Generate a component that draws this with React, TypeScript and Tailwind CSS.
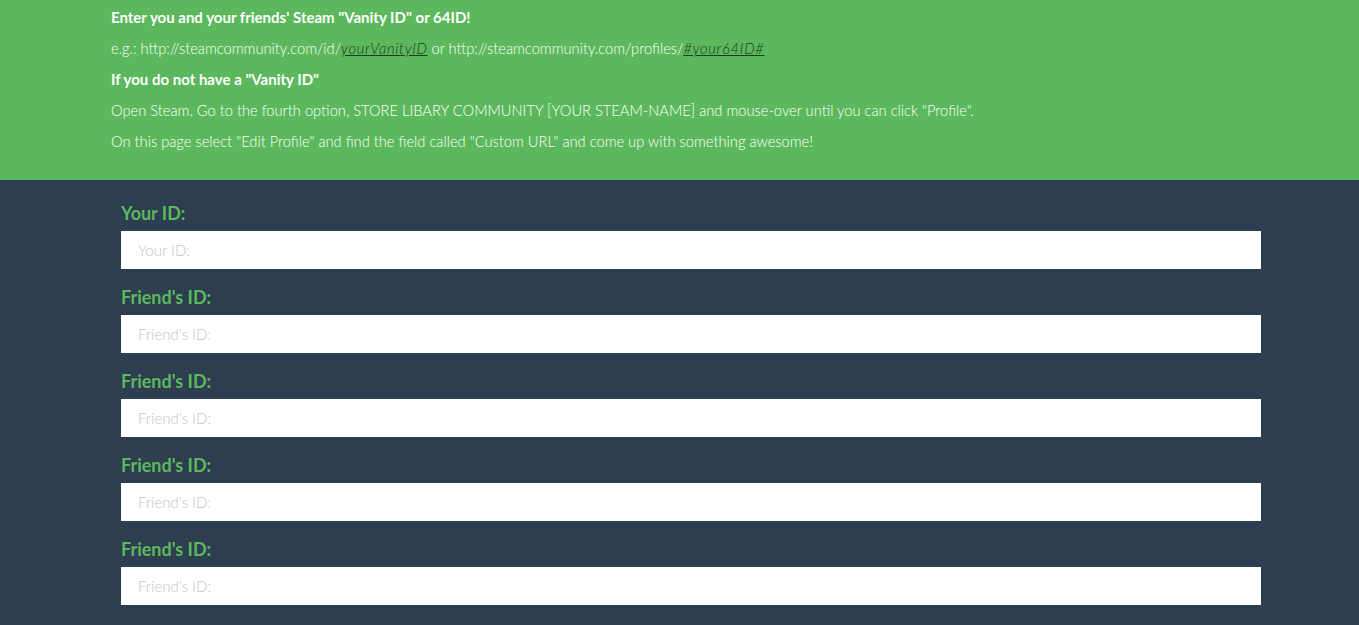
const fields = [
  { label: 'Your ID:', placeholder: 'Your ID:' },
  { label: "Friend's ID:", placeholder: "Friend's ID:" },
  { label: "Friend's ID:", placeholder: "Friend's ID:" },
  { label: "Friend's ID:", placeholder: "Friend's ID:" },
  { label: "Friend's ID:", placeholder: "Friend's ID:" },
]

export default function App() {
  return (
    <div className="min-h-screen bg-[#2c3e50] font-['Lato',sans-serif]">
      <div className="bg-[#5cb85c] pl-[111px] pt-[2px] pb-[23px] text-[15px] leading-[31px] text-white">
        <p className="font-bold">Enter you and your friends' Steam "Vanity ID" or 64ID!</p>
        <p className="text-[14.7px] font-light">
          e.g.: http://steamcommunity.com/id/
          <span className="italic underline tracking-[0.7px] text-[#1e3a23]">yourVanityID</span> or
          http://steamcommunity.com/profiles/
          <span className="italic underline tracking-[0.7px] text-[#1e3a23]">#your64ID#</span>
        </p>
        <p className="font-bold">If you do not have a "Vanity ID"</p>
        <p className="text-[14.7px] font-light">
          Open Steam. Go to the fourth option, STORE LIBARY COMMUNITY [YOUR STEAM-NAME] and mouse-over until you can click "Profile".
        </p>
        <p className="text-[14.7px] font-light">
          On this page select "Edit Profile" and find the field called "Custom URL" and come up with something awesome!
        </p>
      </div>
      <div className="pl-[121px] pt-[22px]">
        <div className="flex w-[1140px] flex-col gap-[17px]">
          {fields.map((f, i) => (
            <div key={i} className="flex flex-col gap-[7px]">
              <label className="text-[18px] font-bold leading-[22px] text-[#5cb85c]">{f.label}</label>
              <input
                className="h-[38px] w-full bg-white px-[17px] text-[15px] font-light text-gray-700 outline-none placeholder:text-[#c4c4c4]"
                placeholder={f.placeholder}
              />
            </div>
          ))}
        </div>
      </div>
    </div>
  )
}
